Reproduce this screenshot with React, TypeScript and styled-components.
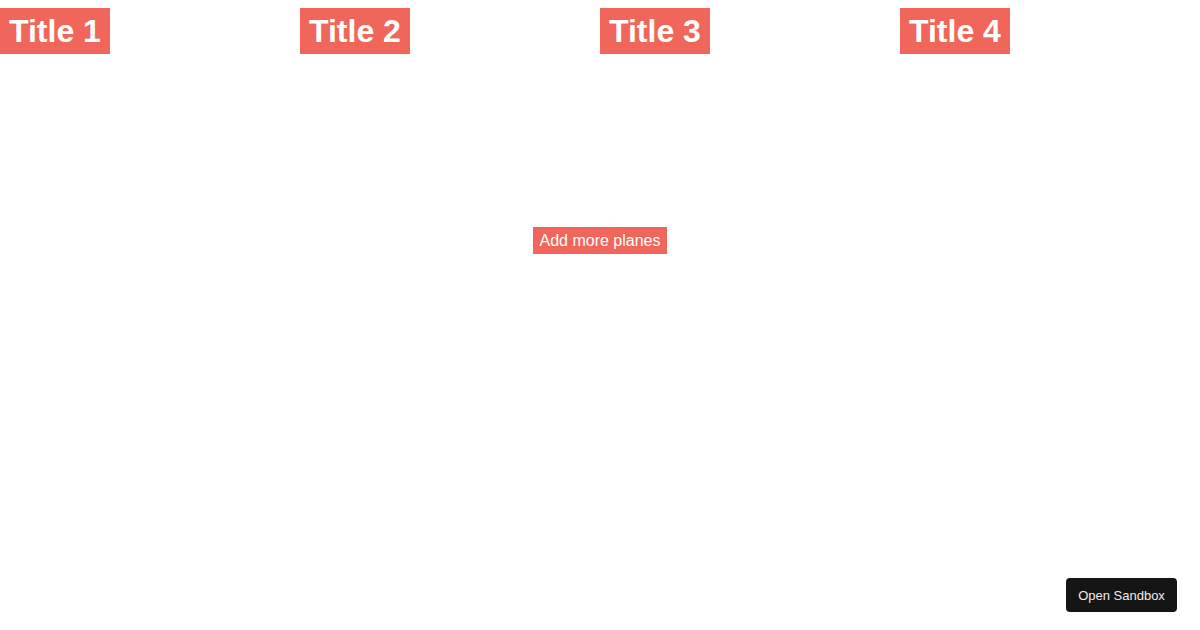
import React from "react";
import styled, { createGlobalStyle } from "styled-components";

const ACCENT = "#f0665a";

const GlobalStyle = createGlobalStyle`
  html, body {
    margin: 0;
    padding: 0;
    background: #ffffff;
    font-family: "Liberation Sans", Arial, sans-serif;
  }
`;

const Page = styled.div`
  width: 1200px;
  height: 630px;
  display: flex;
  flex-direction: column;
  align-items: center;
`;

const Titles = styled.div`
  width: 100%;
  display: grid;
  grid-template-columns: repeat(4, 1fr);
  padding-top: 8px;
`;

const Plane = styled.div`
  display: flex;
`;

const Title = styled.h1`
  margin: 0;
  padding: 4px 9px;
  background: ${ACCENT};
  color: #ffffff;
  font-size: 32px;
  font-weight: 700;
  line-height: 38px;
`;

const AddButton = styled.button`
  margin-top: 173px;
  padding: 4px 7px;
  border: none;
  background: ${ACCENT};
  color: #ffffff;
  font-family: "Liberation Sans", Arial, sans-serif;
  font-size: 16px;
  line-height: 19px;
  cursor: pointer;
`;

const SandboxLink = styled.a`
  position: fixed;
  right: 23px;
  bottom: 18px;
  width: 111px;
  height: 34px;
  display: flex;
  align-items: center;
  justify-content: center;
  box-sizing: border-box;
  border-radius: 4px;
  background: #151515;
  color: #f2e9e9;
  font-family: "Liberation Sans", Arial, sans-serif;
  font-size: 13px;
  text-decoration: none;
`;

const titles = ["Title 1", "Title 2", "Title 3", "Title 4"];

const App = () => (
  <>
    <GlobalStyle />
    <Page>
      <Titles>
        {titles.map((t) => (
          <Plane key={t}>
            <Title>{t}</Title>
          </Plane>
        ))}
      </Titles>
      <AddButton type="button">Add more planes</AddButton>
    </Page>
    <SandboxLink href="#">Open Sandbox</SandboxLink>
  </>
);

export default App;
